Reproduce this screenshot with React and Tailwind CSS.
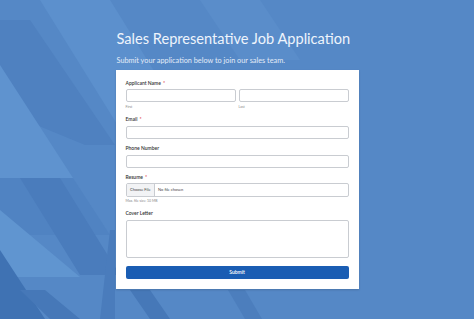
export default function App() {
  const label = "block h-[7px] text-[5px] leading-[7px] font-semibold text-[#333]";
  const input = "block w-full h-[13px] rounded-[2px] border border-[#c9ccd1] bg-white";
  const req = <span className="ml-[2px] text-[#e0474c]">*</span>;

  return (
    <div className="relative w-[474px] h-[319px] overflow-hidden bg-[#5588c6] font-['Lato','Noto_Sans',sans-serif]">
      <svg className="absolute inset-0" width="474" height="319" viewBox="0 0 474 319">
        <rect width="474" height="319" fill="#5588c6" />
        <polygon points="40,0 110,0 200,145 130,145" fill="#5c90cd" />
        <polygon points="0,20 30,20 115,145 85,145 0,110" fill="#4f81c0" />
        <polygon points="0,65 73,178 0,178" fill="#5f93cf" />
        <polygon points="0,178 73,178 110,235 0,235" fill="#5083c2" />
        <polygon points="20,178 60,178 120,275 80,275" fill="#4a7cbc" />
        <polygon points="0,210 80,277 13,277 0,255" fill="#6095d0" />
        <polygon points="0,250 45,319 0,319" fill="#3f72b3" />
        <polygon points="45,290 80,319 50,319 20,290" fill="#4678b8" />
        <polygon points="130,290 150,290 170,319 150,319" fill="#4678b8" />
        <polygon points="228,290 245,290 262,319 245,319" fill="#4c7ebd" />
        <polygon points="110,230 115,230 115,319 100,319" fill="#4a7cbc" />
        <polygon points="200,0 260,0 300,60 240,60" fill="#5a8dca" />
      </svg>

      <div className="relative mx-auto w-[243px] pt-[29px]">
        <h1 className="text-[14.6px] leading-[20px] text-[#eef4fc] pl-[1px] whitespace-nowrap">
          Sales Representative Job Application
        </h1>
        <p className="mt-[7px] text-[7.3px] leading-[10px] text-[#e3ecf8] pl-[1px]">
          Submit your application below to join our sales team.
        </p>

        <form className="mt-[4px] bg-white px-[10px] pt-[10px] pb-[10px] shadow-[0_1px_2px_rgba(0,0,0,0.15)]">
          <span className={label}>Applicant Name{req}</span>
          <div className="mt-[2px] flex gap-[3px]">
            <div className="flex-1">
              <input className={input} />
              <span className="mt-[3px] block h-[5px] text-[3.5px] leading-[5px] text-[#888]">First</span>
            </div>
            <div className="flex-1">
              <input className={input} />
              <span className="mt-[3px] block h-[5px] text-[3.5px] leading-[5px] text-[#888]">Last</span>
            </div>
          </div>

          <span className={"mt-[6px] " + label}>Email{req}</span>
          <input className={"mt-[3px] " + input} />

          <span className={"mt-[6px] " + label}>Phone Number</span>
          <input className={"mt-[3px] " + input} />

          <span className={"mt-[6px] " + label}>Resume{req}</span>
          <div className="mt-[2px] flex h-[14px] w-full overflow-hidden rounded-[2px] border border-[#c9ccd1] text-[4px] text-[#444]">
            <span className="flex items-center bg-[#f2f3f5] border-r border-[#c9ccd1] px-[3.5px]">Choose File</span>
            <span className="flex items-center px-[3px]">No file chosen</span>
          </div>
          <span className="mt-[2px] block h-[5px] text-[3.5px] leading-[5px] text-[#888]">Max. file size: 10 MB</span>

          <span className={"mt-[6px] " + label}>Cover Letter</span>
          <textarea className="mt-[3px] block h-[38px] w-full resize-none rounded-[2px] border border-[#c9ccd1] bg-white" />

          <button type="button" className="mt-[8px] block h-[13px] w-full rounded-[2px] bg-[#1a5db3] text-[5px] font-semibold text-white">
            Submit
          </button>
        </form>
      </div>
    </div>
  );
}
